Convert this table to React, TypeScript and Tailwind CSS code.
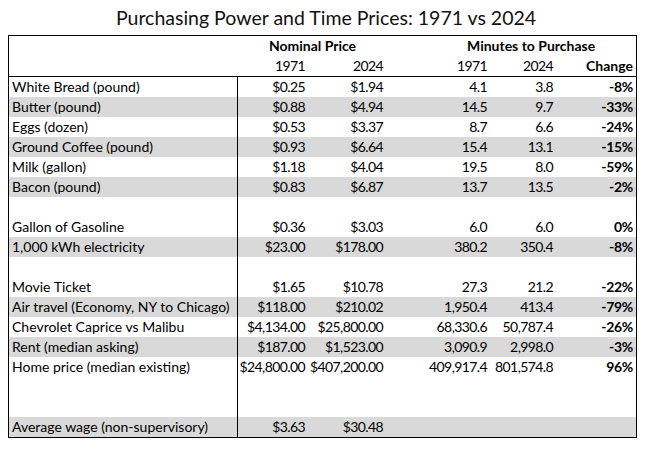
type Row = {
  label?: string;
  p71?: string;
  p24?: string;
  m71?: string;
  m24?: string;
  change?: string;
  shaded?: boolean;
};

const rows: Row[] = [
  { label: "White Bread (pound)", p71: "$0.25", p24: "$1.94", m71: "4.1", m24: "3.8", change: "-8%" },
  { label: "Butter (pound)", p71: "$0.88", p24: "$4.94", m71: "14.5", m24: "9.7", change: "-33%", shaded: true },
  { label: "Eggs (dozen)", p71: "$0.53", p24: "$3.37", m71: "8.7", m24: "6.6", change: "-24%" },
  { label: "Ground Coffee (pound)", p71: "$0.93", p24: "$6.64", m71: "15.4", m24: "13.1", change: "-15%", shaded: true },
  { label: "Milk (gallon)", p71: "$1.18", p24: "$4.04", m71: "19.5", m24: "8.0", change: "-59%" },
  { label: "Bacon (pound)", p71: "$0.83", p24: "$6.87", m71: "13.7", m24: "13.5", change: "-2%", shaded: true },
  {},
  { label: "Gallon of Gasoline", p71: "$0.36", p24: "$3.03", m71: "6.0", m24: "6.0", change: "0%" },
  { label: "1,000 kWh electricity", p71: "$23.00", p24: "$178.00", m71: "380.2", m24: "350.4", change: "-8%", shaded: true },
  {},
  { label: "Movie Ticket", p71: "$1.65", p24: "$10.78", m71: "27.3", m24: "21.2", change: "-22%" },
  { label: "Air travel (Economy, NY to Chicago)", p71: "$118.00", p24: "$210.02", m71: "1,950.4", m24: "413.4", change: "-79%", shaded: true },
  { label: "Chevrolet Caprice vs Malibu", p71: "$4,134.00", p24: "$25,800.00", m71: "68,330.6", m24: "50,787.4", change: "-26%" },
  { label: "Rent (median asking)", p71: "$187.00", p24: "$1,523.00", m71: "3,090.9", m24: "2,998.0", change: "-3%", shaded: true },
  { label: "Home price (median existing)", p71: "$24,800.00", p24: "$407,200.00", m71: "409,917.4", m24: "801,574.8", change: "96%" },
  {},
  {},
  { label: "Average wage (non-supervisory)", p71: "$3.63", p24: "$30.48", shaded: true },
];

const grid = "grid h-5 grid-cols-[229px_71px_78px_104px_66px_79px] items-end leading-5";
const num = "pr-1 text-right whitespace-nowrap tracking-[-0.6px]";

export default function App() {
  return (
    <div className="h-[452px] w-[652px] bg-white font-['Lato',sans-serif] text-[14px] text-black">
      <h1 className="h-[35px] pt-[6px] text-center text-[19.5px] leading-6 text-[#111]">
        Purchasing Power and Time Prices: 1971 vs 2024
      </h1>
      <div className="ml-2 w-[629px] border border-black">
        <div className="border-b border-black">
          <div className={grid}>
            <div />
            <div className="col-span-2 text-center font-bold">Nominal Price</div>
            <div className="col-span-3 pl-[80px] font-bold">Minutes to Purchase</div>
          </div>
          <div className={grid}>
            <div />
            <div className={num}>1971</div>
            <div className={num}>2024</div>
            <div className={num}>1971</div>
            <div className={num}>2024</div>
            <div className="pr-[3px] text-right font-bold">Change</div>
          </div>
        </div>
        {rows.map((row, i) => (
          <div key={i} className={`${grid} ${row.shaded ? "bg-[#d9d9d9]" : ""}`}>
            <div className="h-5 border-r border-black pl-[3px] whitespace-nowrap">{row.label}</div>
            <div className={num}>{row.p71}</div>
            <div className={num}>{row.p24}</div>
            <div className={num}>{row.m71}</div>
            <div className={num}>{row.m24}</div>
            <div className="pr-[3px] text-right font-bold tracking-[-0.3px]">{row.change}</div>
          </div>
        ))}
      </div>
    </div>
  );
}
